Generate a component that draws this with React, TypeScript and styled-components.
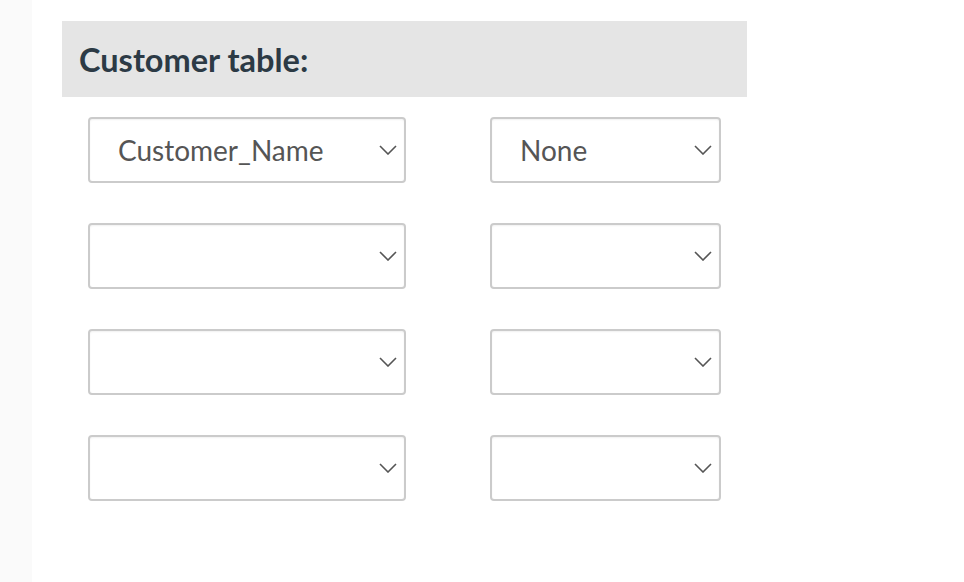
import styled, { createGlobalStyle } from "styled-components";

const GlobalStyle = createGlobalStyle`
  html, body {
    margin: 0;
    padding: 0;
    background: #ffffff;
    font-family: Lato, "Open Sans", sans-serif;
  }
`;

const Page = styled.div`
  display: flex;
  min-height: 582px;
`;

const Sidebar = styled.div`
  width: 32px;
  flex-shrink: 0;
  background: #fafafa;
`;

const Main = styled.div`
  flex: 1;
  padding: 21px 0 0 30px;
`;

const Header = styled.div`
  width: 685px;
  height: 76px;
  box-sizing: border-box;
  background: #e5e5e5;
  display: flex;
  align-items: center;
  padding-left: 17px;
`;

const Title = styled.h2`
  margin: 0;
  font-size: 32.5px;
  font-weight: bold;
  color: #2c3a45;
`;

const Grid = styled.div`
  display: grid;
  grid-template-columns: 318px 231px;
  column-gap: 84px;
  row-gap: 40px;
  padding: 20px 0 0 26px;
`;

const Select = styled.div`
  height: 66px;
  box-sizing: border-box;
  border: 2px solid #cbcbcb;
  border-radius: 4px;
  box-shadow: inset 0 1px 2px rgba(0, 0, 0, 0.06);
  background: #fff;
  display: flex;
  align-items: center;
  justify-content: space-between;
  padding: 0 7px 0 28px;
  font-size: 28px;
  color: #555555;
`;

const Chevron = () => (
  <svg width="18" height="10" viewBox="0 0 18 10" fill="none">
    <path d="M1 1 L9 9 L17 1" stroke="#555" strokeWidth="1.6" />
  </svg>
);

const rows: [string, string][] = [
  ["Customer_Name", "None"],
  ["", ""],
  ["", ""],
  ["", ""],
];

export default function App() {
  return (
    <Page>
      <GlobalStyle />
      <Sidebar />
      <Main>
        <Header>
          <Title>Customer table:</Title>
        </Header>
        <Grid>
          {rows.map(([a, b], i) => [
            <Select key={`a${i}`}>
              <span>{a}</span>
              <Chevron />
            </Select>,
            <Select key={`b${i}`}>
              <span>{b}</span>
              <Chevron />
            </Select>,
          ])}
        </Grid>
      </Main>
    </Page>
  );
}
